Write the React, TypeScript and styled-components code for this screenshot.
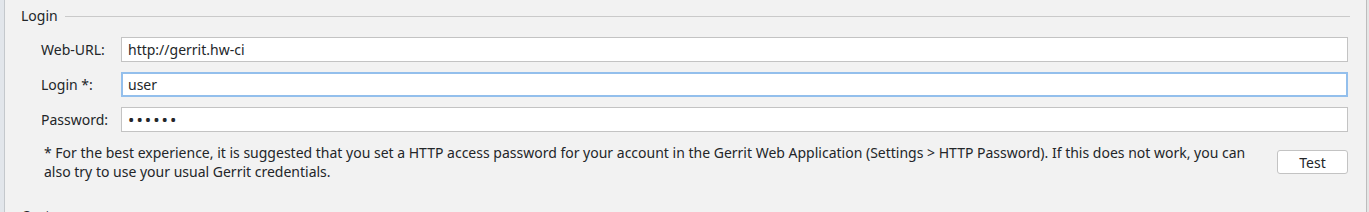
import React from "react";
import styled, { createGlobalStyle } from "styled-components";

const Global = createGlobalStyle`
  html, body {
    margin: 0;
    padding: 0;
    background: #e9e9e9;
  }
  body {
    font-family: "Noto Sans", "DejaVu Sans", sans-serif;
    font-size: 14px;
    color: #232629;
  }
`;

export default function App() {
  return (
    <>
      <Global />
      <Window>
        <LeftEdge />
        <Panel>
          <Group>
            <GroupTitle>
              <span>Login</span>
              <TitleRule />
            </GroupTitle>
            <Form>
              <Label>Web-URL:</Label>
              <Input defaultValue="http://gerrit.hw-ci" />
              <Label>Login *:</Label>
              <Input defaultValue="user" focused />
              <Label>Password:</Label>
              <Input type="password" defaultValue="secret" />
            </Form>
            <NoteRow>
              <Note>
                * For the best experience, it is suggested that you set a HTTP access password for your account in the
                Gerrit Web Application (Settings &gt; HTTP Password). If this does not work, you can also try to use
                your usual Gerrit credentials.
              </Note>
              <Button>Test</Button>
            </NoteRow>
          </Group>
          <NextTitle>Custom</NextTitle>
        </Panel>
        <RightEdge />
      </Window>
    </>
  );
}

const Window = styled("div")`
  display: flex;
  height: 212px;
  overflow: hidden;
`;

const LeftEdge = styled("div")`
  width: 4px;
  background: #e2e6eb;
  border-right: 1px solid #c4c8cc;
`;

const RightEdge = styled("div")`
  width: 2px;
  background: #e6e6e6;
  border-left: 1px solid #bdbdbd;
`;

const Panel = styled("div")`
  flex: 1;
  background: #f2f2f2;
  display: flex;
  flex-direction: column;
`;

const Group = styled("div")`
  padding: 6px 0 0 16px;
`;

const GroupTitle = styled("div")`
  display: flex;
  align-items: center;
  height: 19px;
  margin-right: 16px;
  gap: 7px;
`;

const TitleRule = styled("div")`
  flex: 1;
  height: 1px;
  background: #cacaca;
  margin-top: 1px;
`;

const Form = styled("div")`
  display: grid;
  grid-template-columns: 80px 1fr;
  row-gap: 10px;
  align-items: center;
  padding: 12px 18px 0 20px;
`;

const Label = styled("label")`
  font-size: 14px;
`;

const Input = styled("input")<{ focused?: boolean }>`
  height: 25px;
  box-sizing: border-box;
  border: ${(p) => (p.focused ? "2px solid #93bfec" : "1px solid #c3c3c3")};
  background: #fff;
  font-family: inherit;
  font-size: ${(p) => (p.type === "password" ? "17px" : "14px")};
  color: #232629;
  padding: ${(p) => (p.focused ? "0 5px" : "0 6px")};
  outline: none;
  caret-color: #232629;
  letter-spacing: ${(p) => (p.type === "password" ? "2px" : "normal")};
`;

const NoteRow = styled("div")`
  display: flex;
  align-items: flex-start;
  justify-content: space-between;
  gap: 24px;
  padding: 11px 18px 0 23px;
`;

const Note = styled("div")`
  font-size: 14px;
  line-height: 19px;
  max-width: 1210px;
`;

const Button = styled("button")`
  flex: none;
  width: 71px;
  height: 24px;
  margin-top: 7px;
  border: 1px solid #c3c3c3;
  border-radius: 3px;
  background: #fff;
  font-family: inherit;
  font-size: 14px;
  color: #232629;
  padding: 0;
`;

const NextTitle = styled("div")`
  margin-top: 25px;
  padding-left: 16px;
`;
